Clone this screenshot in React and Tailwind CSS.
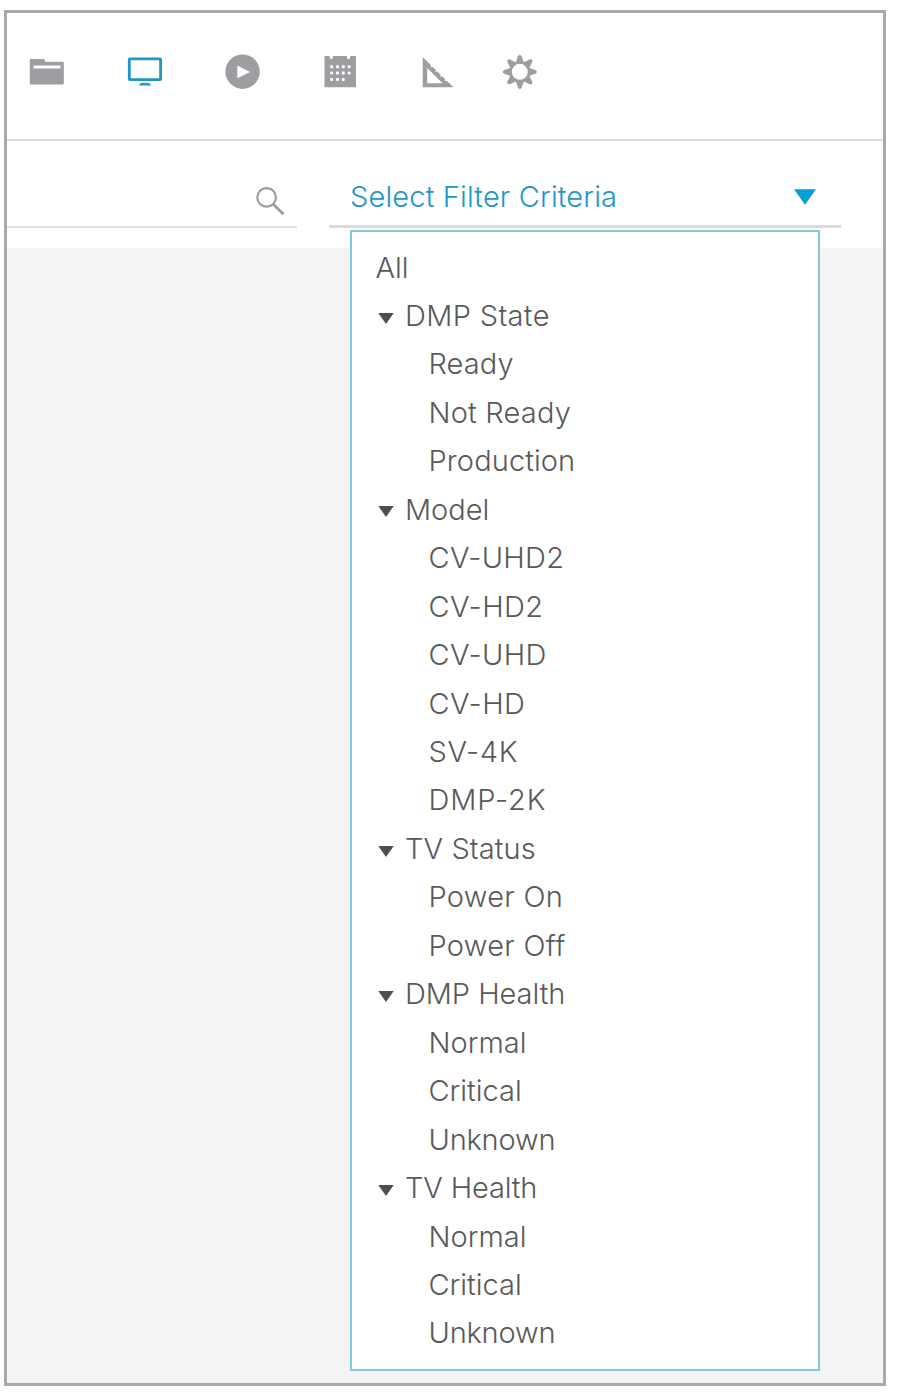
const groups = [
  {
    name: 'DMP State',
    tracking: 'tracking-[0.35px]',
    items: [
      ['Ready', 'tracking-[0.1px]'],
      ['Not Ready', 'tracking-[0.2px]'],
      ['Production', 'tracking-[0.1px]'],
    ],
  },
  {
    name: 'Model',
    tracking: 'tracking-normal',
    items: [
      ['CV-UHD2', 'tracking-[0.3px]'],
      ['CV-HD2', 'tracking-[0.45px]'],
      ['CV-UHD', 'tracking-[0.4px]'],
      ['CV-HD', 'tracking-[0.45px]'],
      ['SV-4K', 'tracking-[0.6px]'],
      ['DMP-2K', 'tracking-[0.9px]'],
    ],
  },
  {
    name: 'TV Status',
    tracking: 'tracking-[0.1px]',
    items: [
      ['Power On', 'tracking-[0.3px]'],
      ['Power Off', 'tracking-[0.3px]'],
    ],
  },
  {
    name: 'DMP Health',
    tracking: 'tracking-[-0.05px]',
    items: [
      ['Normal', 'tracking-normal'],
      ['Critical', 'tracking-normal'],
      ['Unknown', 'tracking-[-0.2px]'],
    ],
  },
  {
    name: 'TV Health',
    tracking: 'tracking-[-0.15px]',
    items: [
      ['Normal', 'tracking-normal'],
      ['Critical', 'tracking-normal'],
      ['Unknown', 'tracking-[-0.2px]'],
    ],
  },
];

function FolderIcon() {
  return (
    <svg className="h-9 w-9 shrink-0" viewBox="0 0 36 36" fill="#9e9da2">
      <path fillRule="evenodd" d="M2 5h12.500c.8 0 1.200.5 1.200 1.200v1.500h17.800c.8 0 1.300.6 1.300 1.300v20.200c0 .8-.6 1.300-1.300 1.300H2c-.8 0-1.200-.6-1.200-1.300V6.200C.8 5.500 1.300 5 2 5zM4.500 11.600v2.800h27v-2.800z" />
    </svg>
  );
}

function MonitorIcon() {
  return (
    <svg className="h-9 w-9 shrink-0" viewBox="0 0 36 36" fill="none">
      <rect x="2.300" y="4.900" width="31.300" height="20.800" rx=".6" stroke="#2196c6" strokeWidth="2.800" />
      <path d="M12.500 31q0-1.800 5.500-1.800t5.500 1.800z" fill="#2196c6" stroke="#2196c6" strokeWidth="1" />
    </svg>
  );
}

function PlayIcon() {
  return (
    <svg className="h-9 w-9 shrink-0" viewBox="0 0 36 36">
      <circle cx="17.600" cy="17.700" r="17.200" fill="#9e9da2" />
      <path d="M12.300 11.500v12.800l12.800-6.400z" fill="#fff" />
    </svg>
  );
}

function CalendarIcon() {
  const dots = [[0, 0], [1, 0], [2, 0], [3, 0], [0, 1], [1, 1], [2, 1], [3, 1], [0, 2], [1, 2], [2, 2]];
  return (
    <svg className="h-9 w-9 shrink-0" viewBox="0 0 36 36">
      <path d="M1.500 2h5.200v1.600a1.600 1.600 0 0 0 3.200 0V2H24v1.600a1.600 1.600 0 0 0 3.200 0V2H33v31.300H1.500z" fill="#9e9da2" />
      {dots.map(([x, y]) => (
        <rect key={`${x}-${y}`} x={7.200 + x * 5.800} y={11.200 + y * 6.400} width="3" height="3" rx="1" fill="#fff" />
      ))}
    </svg>
  );
}

function RulerIcon() {
  return (
    <svg className="h-9 w-9 shrink-0" viewBox="0 0 36 36" fill="#9e9da2">
      <path fillRule="evenodd" d="M1.700 3L10.200 11.500l-.8.8 1 1 1.200-.5 3.400 3.400-.8.8 1 1 1.200-.5 3.400 3.400-.8.8 1 1 1.200-.5 3.200 3.200-.8.8 1 1 1.200-.5L32.500 33.200H1.700zM6.200 14v15.300h15.300z" />
    </svg>
  );
}

function GearIcon() {
  return (
    <svg className="h-9 w-9 shrink-0" viewBox="0 0 36 36" fill="#9e9da2">
      {[0, 45, 90, 135, 180, 225, 270, 315].map((a) => (
        <path key={a} d="M13.700 8.800L15.900 2.200Q17.800 -.8 19.700 2.200L21.900 8.800z" transform={`rotate(${a} 17.800 17.800)`} />
      ))}
      <circle cx="17.800" cy="17.800" r="9.300" fill="#fff" stroke="#9e9da2" strokeWidth="2.600" />
    </svg>
  );
}

function Caret() {
  return (
    <svg className="mt-1 h-[11px] w-4 shrink-0" viewBox="0 0 16 11">
      <path d="M.3 0h15.400L8 11z" fill="#4d4e50" />
    </svg>
  );
}

export default function App() {
  return (
    <div className="h-[1397px] w-[899px] bg-white pt-[10px] pl-1 font-['Inter',sans-serif] font-light">
      <div className="flex h-[1376px] w-[882px] flex-col border-[3px] border-[#a9a9a9] bg-[#f4f4f4]">
        <nav className="flex h-32 shrink-0 items-center border-b-2 border-[#dcdcdc] bg-white pb-2 pl-[22px]">
          <div className="flex gap-[62px]">
            <FolderIcon />
            <MonitorIcon />
            <PlayIcon />
            <CalendarIcon />
          </div>
          <div className="ml-[62px] flex gap-[45px]">
            <RulerIcon />
            <GearIcon />
          </div>
        </nav>
        <div className="flex h-[107px] shrink-0 bg-white">
          <div className="flex h-[87px] w-[290px] items-end justify-end border-b-2 border-[#dfdfdf] pr-3 pb-[10px]">
            <svg className="h-[29px] w-[29px]" viewBox="0 0 29 29" fill="none" stroke="#9b9b9b">
              <circle cx="10.600" cy="10.400" r="9.300" strokeWidth="2.200" />
              <path d="M17.300 17.300L27.500 27.300" strokeWidth="2.600" />
            </svg>
          </div>
          <div className="relative ml-8 h-[87px] w-[512px] border-b-[3px] border-[#dcdcdc]">
            <button className="flex h-[87px] w-full items-center justify-between pt-[24px] pr-[25px] pl-[21px] text-[29px] text-[#1d96c8]">
              <span className="tracking-[0.15px]">Select Filter Criteria</span>
              <svg className="h-4 w-[22px]" viewBox="0 0 22 16">
                <path d="M0 .3h22L11 15.700z" fill="#049fd9" />
              </svg>
            </button>
            <ul className="absolute top-[89px] left-[21px] h-[1141px] w-[470px] border-2 border-[#83c7e0] bg-white pt-[11.5px] pl-[23.5px] text-[29px] leading-[48.45px] text-[#58595b]">
              <li>All</li>
              {groups.map((g) => (
                <li key={g.name}>
                  <div className="flex items-center gap-[11px] pl-[2.5px]">
                    <Caret />
                    <span className={g.tracking}>{g.name}</span>
                  </div>
                  <ul className="pl-[53px]">
                    {g.items.map(([label, tracking]) => (
                      <li key={label} className={tracking}>{label}</li>
                    ))}
                  </ul>
                </li>
              ))}
            </ul>
          </div>
        </div>
      </div>
    </div>
  );
}
